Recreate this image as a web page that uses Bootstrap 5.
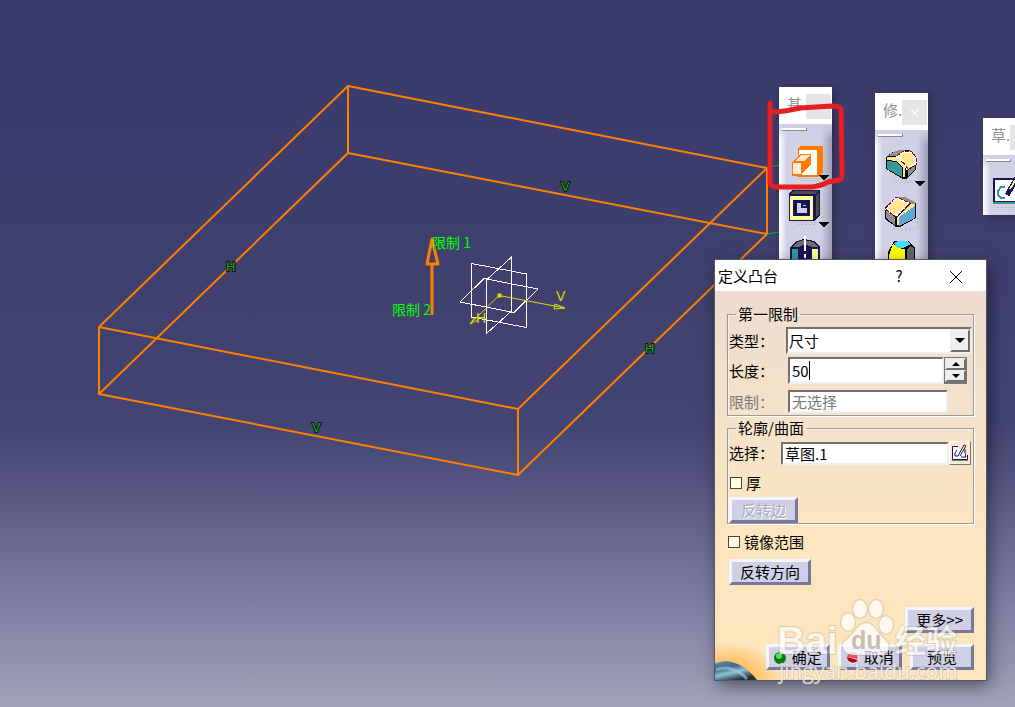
<!DOCTYPE html>
<html lang="zh-CN">
<head>
<meta charset="utf-8">
<meta name="viewport" content="width=device-width, initial-scale=1">
<title>定义凸台</title>
<link rel="stylesheet" href="https://cdn.jsdelivr.net/npm/bootstrap@5.3.0/dist/css/bootstrap.min.css">
<style>
body{font-family:"Noto Sans CJK SC",sans-serif;font-size:15px;line-height:20px;color:#000;background:#3b3b6b}
.scene{min-height:100vh;background:linear-gradient(#39396a 0%,#40406f 40%,#444473 60%,#4f4f7b 66%,#71719a 80%,#a2a2ba 100%)}
.window{position:absolute}
.palette{width:53px;box-shadow:2px 2px 8px rgba(0,0,0,.3)}
.palette-head{height:37px;background:#fff;color:#909090;padding:7px 1px 0 8px}
.palette-head button{width:25px;height:25px;background:#e5e5e5;color:#fff;font-size:12px;line-height:20px}
.palette-body{background:linear-gradient(90deg,#fff 0,#d0d0e7 8px,#cfcfe6 42px,#9d9db5 53px)}
.grip{height:16px;background:linear-gradient(#cfcfe6,#cfcfe600);padding:4px 3px}
.grip div{width:25px;height:3px;background:#fff;border-bottom:1px solid #888;border-right:1px solid #888}
.tool{display:block;width:53px;height:46px;padding:0;border:0;background:none}
.tool svg{display:block}
.pal-a{left:779px;top:87px}.pal-b{left:875px;top:93px}.pal-c{left:983px;top:118px}
.pal-c .tool{height:44px}
.dlg{left:715px;top:260px;width:271px;box-shadow:0 0 0 1px #55556a,3px 5px 16px rgba(0,0,0,.5)}
.dlg-title{height:31px;background:#fff;padding:0 3px}
.dlg-title button{width:32px;height:31px;padding:0;border:0;background:none}
.dlg-title .help{margin-right:25px}
.dlg-title .close-x{margin-right:11px}
.dlg-body{padding:13px 12px 10px;background:radial-gradient(ellipse 55px 38px at 14px 100%,#ffac42 0,#ffc36c 50%,#ffc36c00 100%),linear-gradient(#eddccf,#f5e2c9 35%,#fce5bf 65%,#fde6bd)}
.group{border:1px solid #999;box-shadow:1px 1px 0 #fff,inset 1px 1px 0 #fff8;padding:3px 1px 2px}
.group-b{margin-top:2px;padding-bottom:0}
.group legend{float:none;width:auto;font-size:15px;line-height:20px;margin:0 0 0 7px;padding:0 2px}
.sunk{border:2px solid;border-color:#707070 #eee #eee #707070;border-radius:0;background:#fff;padding:0 2px;font-size:15px;line-height:19px;color:#000;appearance:none;outline:0;min-width:0}
select.sunk{padding:0 1px}
.sunk:disabled{color:#777;opacity:1}
.lab{width:59px}
.lab-off{color:#777}
.row-type .lab{width:57px}
.raised{border:3px solid;border-color:#f5f5ff #77779a #77779a #f5f5ff;border-radius:0;background:#cfcfe6;padding:0 8px;height:26px;font-size:15px;line-height:20px;color:#000;white-space:nowrap}
.raised:disabled{color:#aaaaba;text-shadow:1px 1px #fff;padding:0 9px}
.row-type{height:27px}.row-len{height:27px;margin-top:3px}.row-limit{height:23px;margin-top:6px}
.row-len .pair{margin-right:5px}
.row-sel{height:24px;margin-right:1px}
.row-sel .sunk{margin-left:7px}
.drop,.spin button{background:#eee;border:2px solid;border-color:#eee #707070 #707070 #eee;padding:0}
.drop{position:absolute;right:2px;top:2px;width:20px;height:23px;pointer-events:none}
.spin{width:23px;background:#777;padding:1px}
.spin button{height:12px;width:21px}
.spin svg,.drop svg{display:block;margin:auto}
.tick{appearance:none;width:12px;height:12px;border:1px solid #444;background:#ffffe0;margin:0 4px 0 1px}
.tick:checked{background:#335}
.picker{width:22px;height:24px;padding:0;background:#fce8c8;border:1px solid;border-color:#fff #777 #777 #fff}
.picker svg{display:block;margin:auto}
.flip{margin:7px 0 0 2px}
.more{margin-top:22px}
.actions{gap:8px;margin-top:11px}
.actions .raised{width:64px;padding:0}
.globe{left:0;bottom:0}
.overlay{pointer-events:none}
.cad{font-size:14px;fill:#0f0}
.axis{font-family:"Liberation Sans",sans-serif;font-size:14px}
.mark-v{font-family:"Liberation Sans",sans-serif;font-size:13px;fill:#1aad1a;stroke:#001800;stroke-width:2px;paint-order:stroke}
.wm{font-family:"Liberation Sans","Noto Sans CJK SC",sans-serif;font-weight:700;fill:#fff;fill-opacity:.72;stroke:#9c9484;stroke-opacity:.3;stroke-width:2px;paint-order:stroke}
.wm .site{font-family:"Open Sans",sans-serif;font-weight:400}
</style>
<script defer src="https://cdn.jsdelivr.net/npm/bootstrap@5.3.0/dist/js/bootstrap.bundle.min.js"></script>
</head>
<body>
<main class="scene position-relative overflow-hidden">
<svg class="position-absolute top-0 start-0 w-100 h-100" aria-label="三维视图">
  <g fill="none" stroke="#ff8000" stroke-width="2" stroke-linejoin="round">
    <path d="M348 86 767 168 767 234 348 153ZM99 327 518 409 518 475 99 394ZM348 86 99 327M348 153 99 394M767 168 518 409M767 234 518 475"/>
    <path stroke-width="3" d="M432 315V264M432 239 427 264H438Z"/>
  </g>
  <path d="M767 168 779 165M767 234 779 232" stroke="#00c000"/>
  <g fill="none" stroke="#fff" shape-rendering="crispEdges">
    <path d="M471.500 263.500 526.500 274V327.500L471.500 317ZM486.500 280 511.500 257V311L486.500 333.500ZM460 302 484 278.500 538 289 514 312.500Z"/>
  </g>
  <g fill="none" stroke="#dddd00"><path d="M499 295.500 565 308M499 295.500 470 324M555 304 565 308 554 309ZM475 317 470 324 478 320"/><rect x="498" y="294" width="3" height="3" fill="#dddd00"/></g>
  <text class="axis" x="556" y="301" fill="#dddd00">V</text><text class="axis" x="476" y="323" fill="#dddd00">H</text>
  <text class="cad" x="432" y="248">限制 1</text><text class="cad" x="392" y="315">限制 2</text>
  <text class="mark-v" x="561" y="191">V</text><text class="mark-v" x="312" y="432">V</text>
  <text class="mark-v" x="226" y="271">H</text><text class="mark-v" x="645" y="353">H</text>
</svg>

<section class="window palette pal-a" aria-label="基于草图的特征">
  <div class="palette-head d-flex justify-content-between"><span>基</span><button class="border-0 p-0" aria-label="关闭"></button></div>
  <div class="palette-body"><div class="grip"><div></div></div>
    <button class="tool" aria-label="凸台"><svg width="53" height="46" shape-rendering="crispEdges">
      <path d="M20 38.500H43M22 40.500H41" stroke="#bbb" stroke-dasharray="2 2"/>
      <path d="M19 8 22 6H44V33L39 37H18V24H19Z" fill="#ff7b00"/><path d="M20 10H38V35H20Z" fill="#fff"/>
      <path d="M13 22 22 14H32V24L23 34V36H13Z" fill="#ff7b00"/><path d="M16 21 23 15H31L25 21ZM14 23H22V34H14Z" fill="#ffeade"/>
      <path d="M39 35H50L45 41Z"/></svg></button>
    <button class="tool" aria-label="凹槽"><svg width="53" height="46" shape-rendering="crispEdges">
      <path d="M15 36.500H39M18 38.500H36M42.500 14V34" stroke="#bbb" stroke-dasharray="2 2"/>
      <path d="M10 7 13 4H41V29L36 35H10Z" fill="#171555"/><path d="M14 5H39L36 8H12ZM37 10 40 6V28L37 31Z" fill="#4d4d4d"/>
      <path d="M11 10H34V34H11Z" fill="#ffff99"/><path d="M14 14H31V30H14Z" fill="#171555"/><path d="M17 16H29V28H17Z" fill="#cfcfe6"/><path d="M17 16H23V21H29V28H17Z" fill="#cfcfe6" stroke="#171555" stroke-width="2"/><path d="M22 17H29V21" fill="none" stroke="#171555" stroke-width="4"/>
      <path d="M39 36H50L45 42Z"/></svg></button>
    <button class="tool" aria-label="旋转体"><svg width="53" height="46" shape-rendering="crispEdges">
      <path d="M11 46V15L18 9 25 7 35 9 41 14V46Z" fill="#171555"/><path d="M13 15 18 10 25 8 34 10 40 15H33L26 12 20 15Z" fill="#707070"/><path d="M13 17H19V46H13Z" fill="#389999"/><path d="M33 17H39V46H33Z" fill="#ffff99"/><path d="M26 4V46" stroke="#fff" stroke-width="2" stroke-dasharray="15 3 4 3"/></svg></button>
  </div>
</section>

<section class="window palette pal-b" aria-label="修饰特征">
  <div class="palette-head d-flex justify-content-between"><span>修.</span><button class="border-0 p-0" aria-label="关闭">×</button></div>
  <div class="palette-body"><div class="grip"><div></div></div>
    <button class="tool" aria-label="倒圆角"><svg width="53" height="46" shape-rendering="crispEdges">
      <path d="M18 34.500H42M20 36.500H39M42.500 18V34" stroke="#bbb" stroke-dasharray="2 2"/>
      <path d="M11 11 18 6 24 4H35L41 11V24L31 33H28L11 23Z" fill="#000"/><path d="M12 10 19 6 24 4H31L22 10Z" fill="#8f8f8f"/><path d="M12 15 22 16 27 22V31L12 23Z" fill="#389999"/><path d="M12 11 22 11 30 20V31H28V22L22 15 12 14Z" fill="#ffe58c"/><path d="M22 11 28 6H36L40 11V18L32 23 28 15Z" fill="#ffe98c" stroke="#fff" stroke-width="2"/><path d="M22 10 28 5H36L41 11V19L33 23 28 16" fill="none" stroke="#a00010" stroke-dasharray="4 1"/><path d="M33 24 40 20V24L33 30Z" fill="#8f8f8f"/>
      <path d="M39 35H50L45 41Z"/></svg></button>
    <button class="tool" aria-label="倒角"><svg width="53" height="46" shape-rendering="crispEdges">
      <path d="M18 36.500H42M22 38.500H39M42.500 18V36" stroke="#bbb" stroke-dasharray="2 2"/>
      <path d="M10 16 20 5H30L41 11V26L25 35H21L10 27Z" fill="#000"/><path d="M11 18 20 25V33L11 26Z" fill="#8f8f8f"/><path d="M24 25 40 14V26L24 34Z" fill="#5ca8d2"/><path d="M21 5H30L40 10V13L33 10Z" fill="#8f8f8f"/><path d="M11 17 21 6 34 11 21 24Z" fill="#ffe98c" stroke="#fff" stroke-width="2"/><path d="M10 17 21 5 35 11 21 25Z" fill="none" stroke="#a00010" stroke-dasharray="4 1"/><path d="M22 25 35 12H40V14L24 25V33H22Z" fill="#ffe58c"/></svg></button>
    <button class="tool" aria-label="拔模"><svg width="53" height="46" shape-rendering="crispEdges">
      <path d="M13 46V14L19 3H33L40 9V46Z"/><path d="M14 17 18 6 22 10 30 11V46H14Z" fill="#ff0"/><path d="M19 5 23 3H32L36 6 28 10H22Z" fill="#45dcf5"/><path d="M32 11 35 8 39 10V46H32Z" fill="#666"/></svg></button>
  </div>
</section>

<section class="window palette pal-c" aria-label="草图编辑器">
  <div class="palette-head d-flex justify-content-between"><span>草.</span><button class="border-0 p-0" aria-label="关闭">×</button></div>
  <div class="palette-body"><div class="grip"><div></div></div>
    <button class="tool" aria-label="草图"><svg width="53" height="44" shape-rendering="crispEdges">
      <path d="M10 7H38V33H10Z" fill="#171555"/><path d="M12 9H36V30H12Z" fill="#fff"/><path d="M10 32H38" stroke="#389999" stroke-width="2"/><path d="M22 16H18L15 20V24L18 27H22" fill="none" stroke="#389999" stroke-width="2"/><path d="M24 24 34 7" stroke="#171555" stroke-width="5"/><path d="M27 18 33 8" stroke="#ffff99" stroke-width="2"/><path d="M14 36.500H38" stroke="#bbb" stroke-dasharray="2 2"/></svg></button>
  </div>
</section>

<section class="window dlg" role="dialog" aria-labelledby="dlg-name">
  <header class="dlg-title d-flex align-items-center">
    <span id="dlg-name" class="me-auto">定义凸台</span>
    <button class="help" aria-label="帮助">?</button>
    <button class="close-x" aria-label="关闭"><svg width="14" height="14" stroke="#000" fill="none"><path d="M1 1 13 13M13 1 1 13"/></svg></button>
  </header>
  <form class="dlg-body position-relative" onsubmit="return false">
    <fieldset class="group">
      <legend>第一限制</legend>
      <div class="row-type d-flex align-items-center"><label class="lab flex-shrink-0" for="kind">类型：</label>
        <div class="position-relative flex-grow-1 h-100"><select id="kind" class="sunk w-100 h-100"><option>尺寸</option></select><span class="drop d-flex align-items-center"><svg width="10" height="5"><path d="M0 0H10L5 5Z"/></svg></span></div></div>
      <div class="row-len d-flex align-items-center"><label class="lab flex-shrink-0" for="len">长度：</label>
        <div class="pair d-flex flex-grow-1 h-100"><div class="position-relative flex-grow-1"><input id="len" class="sunk w-100 h-100" value="50"><svg class="overlay position-absolute top-0 start-0" width="24" height="26"><path d="M21.500 4V23" stroke="#000"/></svg></div>
        <div class="spin d-flex flex-column"><button type="button" aria-label="增加"><svg width="8" height="4"><path d="M0 4H8L4 0Z"/></svg></button><button type="button" aria-label="减少"><svg width="8" height="4"><path d="M0 0H8L4 4Z"/></svg></button></div></div></div>
      <div class="row-limit d-flex align-items-center"><label class="lab lab-off flex-shrink-0" for="lim">限制：</label><input id="lim" class="sunk flex-grow-1 h-100 me-4" value="无选择" disabled></div>
    </fieldset>
    <fieldset class="group group-b">
      <legend>轮廓/曲面</legend>
      <div class="row-sel d-flex align-items-center"><label class="flex-shrink-0" for="sel">选择：</label><input id="sel" class="sunk flex-grow-1" value="草图.1">
        <button type="button" class="picker flex-shrink-0" aria-label="草图"><svg width="18" height="18" fill="none" stroke="#171555"><path d="M7 2.500H1.500V15.500H16.500V11" fill="#fff"/><path d="M1 16.500H17" stroke="#389999"/><path d="M6 6 4 9V12H7L13 1 15 2 9 12" stroke-width="1"/><path d="M14 5V9L15 13H10"/></svg></button></div>
      <div class="d-flex align-items-center mt-2"><input type="checkbox" class="tick" id="thick"><label for="thick">厚</label></div>
      <button type="button" class="raised mt-1" disabled>反转边</button>
    </fieldset>
    <div class="d-flex align-items-center mt-2"><input type="checkbox" class="tick" id="mirror"><label for="mirror">镜像范围</label></div>
    <button type="button" class="raised flip">反转方向</button>
    <div class="more text-end"><button type="button" class="raised">更多&gt;&gt;</button></div>
    <div class="actions d-flex justify-content-end"><button class="raised"><svg width="14" height="14"><circle cx="6" cy="6" r="6" fill="#087808"/><circle cx="5" cy="4" r="3" fill="#55e055"/></svg> 确定</button><button type="button" class="raised"><svg width="14" height="14"><circle cx="7" cy="6" r="6" fill="#eee"/><path d="M1 5 12 8A6 6 0 0 1 1 5Z" fill="#a01010"/><path d="M1 5A6 6 0 0 1 11 2L12 7Z" fill="#ef5050"/></svg> 取消</button><button type="button" class="raised">预览</button></div>
    <svg class="globe position-absolute overlay" width="44" height="20"><defs><linearGradient id="earth" x2=".5" y2="1"><stop stop-color="#fff0c8"/><stop offset=".15" stop-color="#5d7b8f"/><stop offset=".4" stop-color="#3d6a8c"/><stop offset=".65" stop-color="#8ec2d6"/><stop offset="1" stop-color="#25303d"/></linearGradient></defs><path d="M0 2C16 -2 32 6 42 20H0Z" fill="url(#earth)"/><path d="M1 10C12 5 24 10 32 19" fill="none" stroke="#a9cfdc" stroke-width="3" opacity=".6"/></svg>
  </form>
</section>

<svg class="overlay position-absolute top-0 start-0 w-100 h-100" aria-hidden="true">
  <path d="M770 103V183Q771 187 778 187L812 187Q821 186 828 182L839 180Q842 179 842 175L841 109Q840 106 832 106L800 108Q783 112 772 112" fill="none" stroke="#e71e22" stroke-width="5" stroke-linecap="round" stroke-linejoin="round"/>
  <g class="wm"><text x="777" y="654" font-size="39">Bai</text><text x="895" y="652" font-size="31">经验</text><text class="site" x="779" y="679" font-size="21">jingyan.baidu.com</text>
  <g><ellipse cx="848" cy="622" rx="7" ry="9"/><ellipse cx="860" cy="609" rx="7" ry="9"/><ellipse cx="876" cy="609" rx="7" ry="9"/><ellipse cx="886" cy="625" rx="7" ry="9"/><path d="M866 623Q873 623 878 632L888 643Q891 655 879 655L853 655Q841 653 843 643L854 632Q859 623 866 623Z"/></g></g>
  <text x="851" y="649" font-family="Liberation Sans" font-size="25" font-weight="700" fill="#b3aaa0" fill-opacity=".75">du</text>
</svg>
</main>
</body>
</html>
